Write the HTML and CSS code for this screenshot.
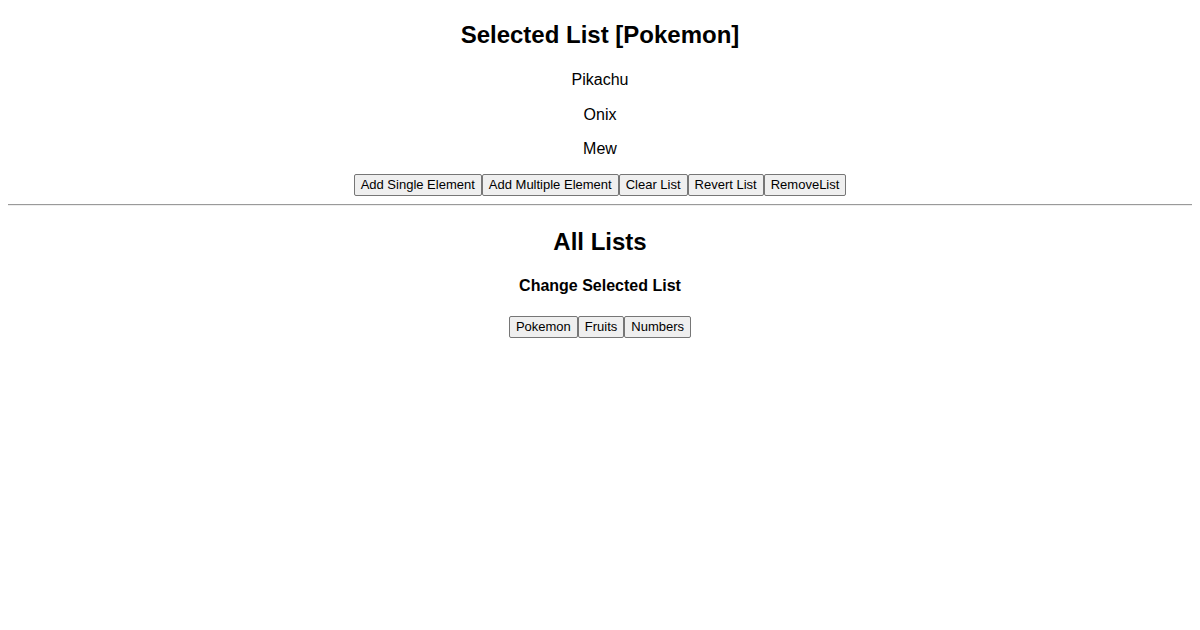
FILE: index.html
```html
<!DOCTYPE html>
<html>
<head>
<meta charset="utf-8">
<link rel="stylesheet" href="styles.css">
</head>
<body>
<div class="app">
  <h2 class="title title-top">Selected List [Pokemon]</h2>
  <p class="item">Pikachu</p>
  <p class="item">Onix</p>
  <p class="item item-last">Mew</p>
  <div class="btn-row"><button class="btn">Add Single Element</button><button class="btn">Add Multiple Element</button><button class="btn">Clear List</button><button class="btn">Revert List</button><button class="btn">RemoveList</button></div>
  <hr class="divider">
  <h2 class="title title-all">All Lists</h2>
  <h4 class="subtitle">Change Selected List</h4>
  <div class="btn-row"><button class="btn">Pokemon</button><button class="btn">Fruits</button><button class="btn">Numbers</button></div>
</div>
</body>
</html>
```
FILE: styles.css
```css
body {
  margin: 8px;
  font-family: "Liberation Sans", Arial, sans-serif;
  color: #000;
  background: #fff;
}
.app {
  display: flow-root;
  text-align: center;
}
.title {
  font-size: 24px;
  font-weight: bold;
  margin: 19.92px 0;
}
.title-top {
  margin-top: 13px;
  margin-bottom: 22px;
}
.title-all {
  margin-top: 22px;
}
.subtitle {
  font-size: 16px;
  font-weight: bold;
  margin: 21.28px 0;
}
.item {
  font-size: 16px;
  line-height: 18.5px;
  margin: 16px 0;
}
.item-last {
  margin-bottom: 15px;
}
.btn-row {
  display: flex;
  justify-content: center;
}
.btn {
  font-family: "Liberation Sans", Arial, sans-serif;
  font-size: 13px;
  line-height: 16px;
  color: #000;
  background: #efefef;
  border: 1px solid #767676;
  border-radius: 2px;
  padding: 2px 6px;
  margin: 0;
}
.divider {
  margin: 8px 0;
  border: 0;
  border-top: 1px solid #9a9a9a;
  border-bottom: 1px solid #eee;
}
```
